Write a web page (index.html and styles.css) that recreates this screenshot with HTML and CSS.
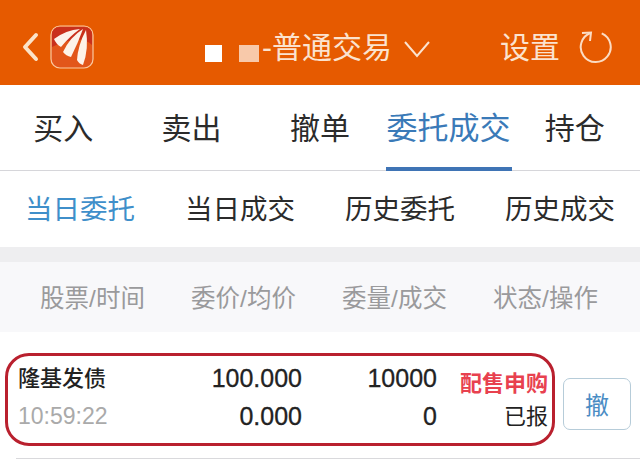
FILE: index.html
```html
<!DOCTYPE html>
<html lang="zh-CN">
<head>
    <meta charset="UTF-8" />
    <meta name="viewport" content="width=device-width, initial-scale=1" />
    <title>普通交易</title>
    <link rel="stylesheet" href="styles.css">
</head>
<body>

<header class="topbar">
    <div class="topbar-left">
        <svg class="back-icon" viewBox="0 0 18 30" aria-hidden="true">
            <path d="M15 3 L4 15 L15 27" fill="none" stroke="#fbe3c8" stroke-width="4" stroke-linecap="round" stroke-linejoin="round" />
        </svg>
        <svg class="logo" viewBox="0 0 44 44" aria-hidden="true">
            <rect x="1" y="1" width="42" height="42" rx="9" fill="#e2561a" stroke="#fbc9a0" stroke-width="1.2" />
            <path d="M2 10 Q2 2 10 2 L34 2 Q42 2 42 10 L42 20 Q30 8 2 22 Z" fill="#c9301c" />
            <path d="M30 4 Q16 5 4 14 Q6 19 11 22 Q20 11 30 4 Z" fill="#fdf3ea" />
            <path d="M33 4 Q20 12 13 27 Q16 31 21 32 Q28 18 33 4 Z" fill="#fdf3ea" />
            <path d="M36 5 Q28 20 27 35 Q29 39 33 40 Q39 24 36 5 Z" fill="#fdf3ea" />
        </svg>
    </div>
    <div class="topbar-title">
        <span class="mask"></span>
        <span class="mask mask-faded"></span>
        <span class="topbar-text">-普通交易</span>
        <svg class="down-icon" viewBox="0 0 28 18" aria-hidden="true">
            <path d="M2 2 L14 16 L26 2" fill="none" stroke="#fbe3cf" stroke-width="2" />
        </svg>
    </div>
    <div class="topbar-right">
        <span class="topbar-text">设置</span>
        <svg class="refresh-icon" viewBox="0 0 36 40" aria-hidden="true">
            <path d="M24.7 5.3 A15 15 0 1 1 13.5 5" fill="none" stroke="#fbdcc3" stroke-width="2" />
            <path d="M5 5 L14 4.5 L13 13" fill="none" stroke="#fbdcc3" stroke-width="2" />
        </svg>
    </div>
</header>

<nav class="main-tabs">
    <div class="main-tab">买入</div>
    <div class="main-tab">卖出</div>
    <div class="main-tab">撤单</div>
    <div class="main-tab active">委托成交</div>
    <div class="main-tab">持仓</div>
</nav>

<nav class="sub-tabs">
    <div class="sub-tab active">当日委托</div>
    <div class="sub-tab">当日成交</div>
    <div class="sub-tab">历史委托</div>
    <div class="sub-tab">历史成交</div>
</nav>

<div class="gap-band"></div>

<div class="col-head">
    <div>股票/时间</div>
    <div>委价/均价</div>
    <div>委量/成交</div>
    <div>状态/操作</div>
</div>

<section class="order-row">
    <div class="order-mark"></div>
    <div class="order-data">
        <div class="name">隆基发债</div>
        <div class="num">100.000</div>
        <div class="num">10000</div>
        <div class="kind">配售申购</div>
        <div class="time">10:59:22</div>
        <div class="num">0.000</div>
        <div class="num">0</div>
        <div class="state">已报</div>
    </div>
    <button class="cancel-btn">撤</button>
</section>

</body>
</html>
```

FILE: styles.css
```css
* { box-sizing: border-box; }
html, body { height: 100%; }
body {
  margin: 0;
  overflow: hidden;
  background: #fff;
  color: #2b2b2b;
  font-family: "Liberation Sans", "Noto Sans CJK SC", sans-serif;
}

.topbar {
  height: 85px;
  padding-top: 9px;
  background: #e65a00;
  color: #fbe3cf;
  display: flex;
  align-items: center;
  font-size: 30px;
}
.topbar-text { margin-bottom: 5px; }
.topbar-left {
  display: flex;
  align-items: center;
  gap: 11px;
  padding-left: 21px;
  width: 205px;
}
.back-icon { width: 18px; height: 30px; }
.logo { width: 44px; height: 44px; }
.topbar-title {
  display: flex;
  align-items: center;
  width: 295px;
}
.mask {
  width: 17px;
  height: 17px;
  background: #fff;
  margin-right: 17px;
  margin-top: 12px;
}
.mask-faded {
  width: 20px;
  background: #f8c9aa;
  margin-right: 3px;
}
.down-icon { width: 28px; height: 18px; margin-left: 11px; margin-top: 3px; }
.topbar-right {
  display: flex;
  align-items: center;
  gap: 17px;
}
.refresh-icon { width: 36px; height: 40px; margin-top: 2px; }

.main-tabs {
  height: 86px;
  padding-bottom: 4px;
  display: flex;
  border-bottom: 1px solid #d6d6da;
}
.main-tab {
  flex: 1;
  padding-right: 2px;
  display: flex;
  align-items: center;
  justify-content: center;
  font-size: 30px;
  position: relative;
}
.main-tab.active { padding-right: 0; color: #3a7ab8; font-size: 31px; }
.main-tab.active::after {
  content: "";
  position: absolute;
  left: 1px;
  right: 0;
  bottom: -5px;
  height: 4px;
  background: #3f74b5;
}

.sub-tabs {
  height: 76px;
  padding-bottom: 4px;
  display: flex;
}
.sub-tab {
  flex: 1;
  display: flex;
  align-items: center;
  justify-content: center;
  font-size: 27.5px;
}
.sub-tab.active { color: #3f8fca; }

.gap-band { height: 15px; background: #eeeef0; }

.col-head {
  height: 70px;
  padding-left: 17px;
  padding-bottom: 2px;
  background: #f8f8fa;
  display: grid;
  grid-template-columns: repeat(4, 151px);
  align-items: center;
  justify-items: center;
  font-size: 24.5px;
  color: #9a9a9c;
}

.order-row {
  position: relative;
  margin-left: 16px;
  height: 127px;
  border-bottom: 1px solid #d9d9dc;
  display: flex;
  align-items: center;
}
.order-mark {
  position: absolute;
  left: -11px;
  top: 21px;
  width: 550px;
  height: 93px;
  border: 3px solid #b9202e;
  border-radius: 24px;
}
.order-data {
  width: 532px;
  margin-left: 2px;
  margin-top: 5px;
  display: grid;
  grid-template-columns: 104px 180px 135px 111px;
  grid-template-rows: 38px 38px;
  align-items: center;
  font-size: 25px;
  color: #222;
}
.name { font-size: 22px; font-weight: 500; margin-bottom: 5px; }
.time { font-size: 23px; color: #aaa; }
.num { text-align: right; -webkit-text-stroke: 0.3px #222; }
.kind { font-size: 22px; font-weight: 700; color: #e8414f; text-align: right; margin-top: 5px; }
.state { font-size: 22px; text-align: right; margin-bottom: 6px; }

.cancel-btn {
  margin-left: 13px;
  margin-top: 17px;
  width: 68px;
  height: 52px;
  background: #fff;
  border: 1px solid #b6ccd9;
  border-radius: 7px;
  color: #4a8cc4;
  font-size: 24px;
  font-family: inherit;
  padding: 0;
}
```
